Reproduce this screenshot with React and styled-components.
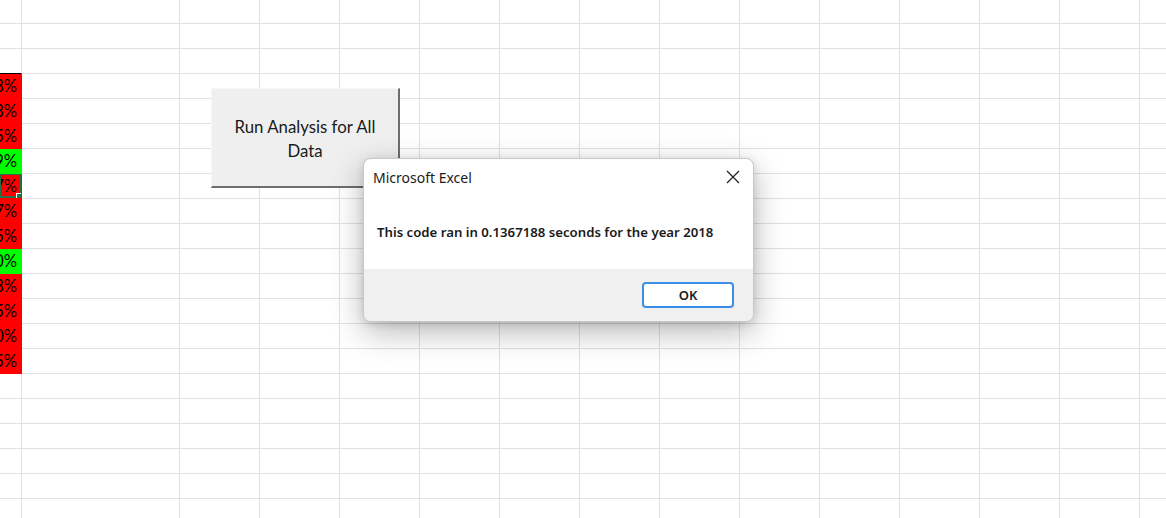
import React from "react"
import styled, { createGlobalStyle } from "styled-components"

const GlobalStyle = createGlobalStyle`
  html, body {
    margin: 0;
    padding: 0;
    background: #ffffff;
    overflow: hidden;
  }
  #root {
    width: 1166px;
    height: 518px;
  }
`

const Page = styled.div`
  position: relative;
  width: 1166px;
  height: 518px;
  overflow: hidden;
  background: #ffffff;
`

const Sheet = styled.div`
  display: grid;
  grid-template-columns: 22px 158px repeat(13, 80px);
  grid-template-rows: 24px repeat(20, 25px);
`

const Cell = styled.div`
  position: relative;
  box-sizing: border-box;
  display: flex;
  align-items: center;
  justify-content: flex-end;
  overflow: hidden;
  white-space: nowrap;
  padding-right: 4px;
  border-right: 1px solid ${p => p.$fill || "#e1e1e1"};
  border-bottom: 1px solid ${p => (p.$ruleBelow ? "#000000" : p.$fill || "#e1e1e1")};
  background: ${p => p.$fill || "transparent"};
  font-family: Lato, "Liberation Sans", sans-serif;
  font-size: 16.5px;
  color: #000000;
`

const Selected = styled.div`
  position: absolute;
  inset: -1px -1px 0 -1px;
  border: 2px solid #217346;
  pointer-events: none;
`

const Handle = styled.div`
  position: absolute;
  right: -3px;
  bottom: -4px;
  width: 5px;
  height: 5px;
  background: #217346;
  border: 1px solid #ffffff;
`

const FormButton = styled.div`
  position: absolute;
  left: 211px;
  top: 88px;
  width: 189px;
  height: 100px;
  box-sizing: border-box;
  display: flex;
  align-items: center;
  justify-content: center;
  text-align: center;
  padding: 3px 14px 0;
  background: #efefef;
  border-top: 1px solid #f7f7f7;
  border-left: 1px solid #f7f7f7;
  border-right: 2px solid #6e6e6e;
  border-bottom: 2px solid #6e6e6e;
  font-family: Lato, "Liberation Sans", sans-serif;
  font-size: 16.8px;
  line-height: 24px;
  color: #1a1a1a;
`

const Dialog = styled.div`
  position: absolute;
  left: 363px;
  top: 158px;
  width: 391px;
  height: 164px;
  box-sizing: border-box;
  display: flex;
  flex-direction: column;
  border: 1px solid #c8c8c8;
  border-radius: 8px;
  overflow: hidden;
  background: #ffffff;
  box-shadow: 0 10px 32px rgba(0, 0, 0, 0.28), 0 2px 8px rgba(0, 0, 0, 0.12);
  font-family: "Noto Sans", "Open Sans", sans-serif;
`

const TitleBar = styled.div`
  display: flex;
  align-items: center;
  justify-content: space-between;
  height: 36px;
  padding: 0 8px 0 9px;
`

const Title = styled.span`
  font-size: 14px;
  color: #1b1b1b;
`

const CloseButton = styled.button`
  display: flex;
  align-items: center;
  justify-content: center;
  width: 24px;
  height: 24px;
  padding: 0;
  border: none;
  background: transparent;
`

const Message = styled.div`
  flex: 1;
  display: flex;
  align-items: center;
  padding: 0 13px 0;
  font-size: 13.2px;
  font-weight: 600;
  color: #1a1a1a;
`

const Footer = styled.div`
  display: flex;
  justify-content: flex-end;
  align-items: center;
  height: 52px;
  padding: 0 19px;
  background: #f0f0f0;
`

const OkButton = styled.button`
  width: 92px;
  height: 26px;
  box-sizing: border-box;
  border: 2px solid #3a8ee6;
  border-radius: 4px;
  background: #ffffff;
  font-family: "Noto Sans", "Open Sans", sans-serif;
  font-size: 13px;
  font-weight: 600;
  color: #1a1a1a;
`

const RED = "#ff0000"
const GREEN = "#00ff00"

// column A values, rows 4 to 15 (only the right edge shows)
const returns = [
  { v: "-7.3%", c: RED },
  { v: "-8.3%", c: RED },
  { v: "-62.5%", c: RED },
  { v: "81.9%", c: GREEN },
  { v: "-3.7%", c: RED, sel: true },
  { v: "-9.7%", c: RED },
  { v: "-3.5%", c: RED },
  { v: "84.0%", c: GREEN },
  { v: "-7.3%", c: RED },
  { v: "-3.5%", c: RED },
  { v: "-9.0%", c: RED },
  { v: "-44.5%", c: RED },
]

const ROWS = 21
const COLS = 15

export default function App() {
  const cells = []
  for (let r = 0; r < ROWS; r++) {
    for (let c = 0; c < COLS; c++) {
      const data = c === 0 && r >= 3 && r < 3 + returns.length ? returns[r - 3] : null
      cells.push(
        <Cell key={`${r}-${c}`} $fill={data ? data.c : null} $ruleBelow={c === 0 && r === 2}>
          {data ? data.v : null}
          {data && data.sel ? (
            <Selected>
              <Handle />
            </Selected>
          ) : null}
        </Cell>
      )
    }
  }

  return (
    <Page>
      <GlobalStyle />
      <Sheet>{cells}</Sheet>
      <FormButton>Run Analysis for All Data</FormButton>
      <Dialog>
        <TitleBar>
          <Title>Microsoft Excel</Title>
          <CloseButton aria-label="Close">
            <svg width="14" height="14" viewBox="0 0 14 14">
              <path d="M1 1 L13 13 M13 1 L1 13" stroke="#1b1b1b" strokeWidth="1.2" fill="none" />
            </svg>
          </CloseButton>
        </TitleBar>
        <Message>This code ran in 0.1367188 seconds for the year 2018</Message>
        <Footer>
          <OkButton>OK</OkButton>
        </Footer>
      </Dialog>
    </Page>
  )
}
